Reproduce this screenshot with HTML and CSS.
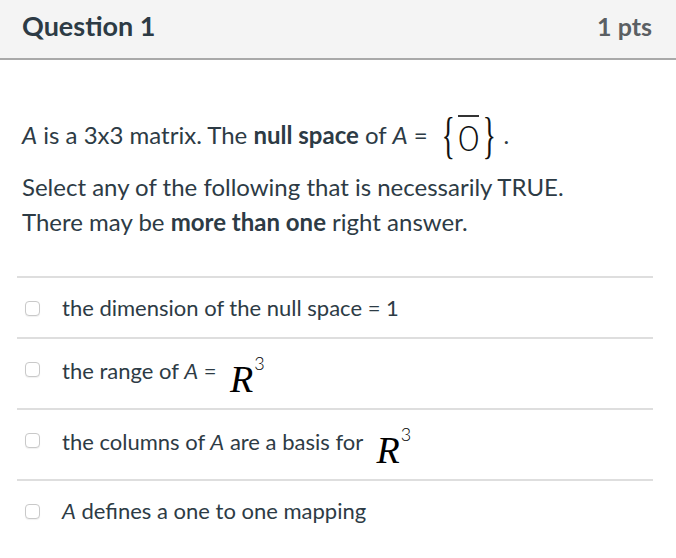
FILE: index.html
```html
<!DOCTYPE html>
<html lang="en">
<head>
<meta charset="utf-8">
<title>Question 1</title>
<link rel="stylesheet" href="styles.css">
</head>
<body>
<div class="question">
  <header class="q-header">
    <h2 class="q-title">Question 1</h2>
    <span class="q-points">1 pts</span>
  </header>
  <div class="q-text">
    <p class="q-line1"><i>A</i> is a 3x3 matrix. The <b>null space</b> of <i>A</i> = <span class="set"><span class="brace">{</span><span class="zero">0</span><span class="brace">}</span></span> .</p>
    <p class="q-line2">Select any of the following that is necessarily TRUE.<br>There may be <b>more than one</b> right answer.</p>
  </div>
  <ul class="answers">
    <li class="answer"><span class="box"></span><span class="label">the dimension of the null space = 1</span></li>
    <li class="answer"><span class="box"></span><span class="label">the range of <i>A</i> = <span class="rn"><span class="r">R</span><span class="exp">3</span></span></span></li>
    <li class="answer"><span class="box"></span><span class="label">the columns of <i>A</i> are a basis for <span class="rn"><span class="r">R</span><span class="exp">3</span></span></span></li>
    <li class="answer"><span class="box"></span><span class="label"><i>A</i> defines a one to one mapping</span></li>
  </ul>
</div>
</body>
</html>
```
FILE: styles.css
```css
* { box-sizing: border-box; }
html, body { margin: 0; padding: 0; background: #fff; }
body {
  font-family: Lato, "Open Sans", sans-serif;
  color: #2d3b45;
  width: 676px;
  height: 558px;
  overflow: hidden;
}
.q-header {
  height: 60px;
  background: #f4f4f4;
  border-bottom: 2px solid #a9a9a9;
  display: flex;
  align-items: center;
  justify-content: space-between;
  padding: 0 24px 7px 22px;
}
.q-title {
  margin: 0;
  font-size: 27px;
  font-weight: 700;
  color: #2d3b45;
}
.q-points {
  font-size: 25px;
  font-weight: 700;
  color: #5b5f63;
}
.q-text {
  padding: 0 22px;
  font-size: 24px;
}
.q-text p { margin: 0; }
.q-line1 {
  margin-top: 57px !important;
  line-height: 35px;
  height: 35px;
}
.q-line2 {
  margin-top: 17px !important;
  line-height: 35px;
}
b { font-weight: 700; }
.set {
  display: inline-flex;
  align-items: center;
  height: 35px;
  vertical-align: top;
  margin-left: 6px;
  color: #111;
}
.brace {
  font-family: "Liberation Serif", serif;
  font-size: 34px;
  display: inline-block;
  transform: scale(0.8, 1.5);
  line-height: 1;
}
.zero {
  font-family: Lato, sans-serif;
  font-weight: 300;
  font-size: 36px;
  line-height: 1;
  padding-top: 2px;
  border-top: 2px solid #333;
  margin: 0 2px;
}
.answers {
  list-style: none;
  margin: 37px 23px 0 17px;
  padding: 0;
}
.answer {
  border-top: 2px solid #dedede;
  padding: 15px 0 15px 8px;
  display: flex;
  align-items: flex-start;
  font-size: 22px;
  line-height: 29px;
}
.box {
  flex: none;
  width: 15px;
  height: 15px;
  border: 1.5px solid #c9c9c9;
  border-radius: 4px;
  margin: 8px 22px 0 0;
  background: #fff;
  box-shadow: 0 1px 1px rgba(0,0,0,0.06);
}
.rn {
  display: inline-block;
  margin-left: 8px;
  margin-bottom: -5px;
  font-family: "Liberation Serif", serif;
  color: #000;
  line-height: 1;
  vertical-align: -13px;
}
.r {
  font-style: italic;
  font-size: 38px;
}
.exp {
  font-family: Lato, sans-serif;
  font-weight: 300;
  font-size: 18px;
  vertical-align: 22px;
  margin-left: 1px;
}
```
